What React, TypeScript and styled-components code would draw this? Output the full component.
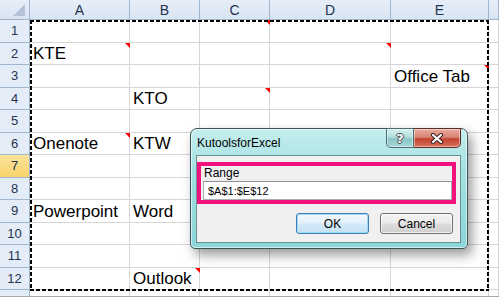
import { FC } from "react";
import styled, { createGlobalStyle } from "styled-components";

const GlobalStyle = createGlobalStyle`
  html, body {
    margin: 0;
    padding: 0;
    background: #fff;
  }
  body {
    width: 499px;
    height: 300px;
    overflow: hidden;
  }
`;

const Screen = styled.div`
  position: relative;
  width: 499px;
  height: 300px;
  overflow: hidden;
  background: #fff;
`;

const Sheet = styled.div`
  display: grid;
  grid-template-columns: 30px 100px 70px 70px 121px 98px 1fr;
  grid-template-rows: 20px repeat(13, 22.5px);
  height: 297px;
  overflow: hidden;
  border-bottom: 1px solid #a6a6a6;
  box-sizing: border-box;
`;

const Corner = styled.div`
  position: relative;
  background: linear-gradient(180deg, #e7eef8 0%, #d9e4f2 100%);
  border-right: 1px solid #9eb6ce;
  border-bottom: 1px solid #9eb6ce;

  &::after {
    content: "";
    position: absolute;
    right: 4px;
    bottom: 3px;
    border-left: 12px solid transparent;
    border-bottom: 12px solid #b4c4d8;
  }
`;

const ColHeader = styled.div`
  display: flex;
  align-items: center;
  justify-content: center;
  background: linear-gradient(180deg, #e7eef8 0%, #d9e4f2 100%);
  border-right: 1px solid #9eb6ce;
  border-bottom: 1px solid #9eb6ce;
  font-family: "Liberation Sans", Arial, sans-serif;
  font-size: 14px;
  color: #1e3350;
`;

const RowHeader = styled.div<{ $active?: boolean }>`
  display: flex;
  align-items: center;
  justify-content: center;
  background: ${(p) =>
    p.$active
      ? "linear-gradient(180deg, #fbe39b 0%, #f8d36a 100%)"
      : "#e4ecf7"};
  border-right: 1px solid #9eb6ce;
  border-bottom: 1px solid #9eb6ce;
  font-family: "Liberation Sans", Arial, sans-serif;
  font-size: 13px;
  color: #1e3350;
  box-sizing: border-box;
`;

const Cell = styled.div<{ $comment?: boolean }>`
  position: relative;
  display: flex;
  align-items: center;
  padding-left: 3px;
  padding-top: 2px;
  border-right: 1px solid #d6d6d6;
  border-bottom: 1px solid #d6d6d6;
  font-family: "Liberation Sans", Arial, sans-serif;
  font-size: 17px;
  color: #000;
  white-space: nowrap;
  box-sizing: border-box;

  &::after {
    content: "";
    display: ${(p) => (p.$comment ? "block" : "none")};
    position: absolute;
    top: 0;
    right: -1px;
    border-top: 5px solid #ff0000;
    border-left: 5px solid transparent;
  }
`;

const SheetWrap = styled.div`
  position: relative;
`;

const Marquee = styled.div`
  position: absolute;
  left: 30px;
  top: 20px;
  width: 459px;
  height: 271px;
  pointer-events: none;
  background:
    repeating-linear-gradient(90deg, #000 0 4px, transparent 4px 6px) top left / 100% 2px no-repeat,
    repeating-linear-gradient(90deg, #000 0 4px, transparent 4px 6px) bottom left / 100% 2px no-repeat,
    repeating-linear-gradient(180deg, #000 0 4px, transparent 4px 6px) top left / 2px 100% no-repeat,
    repeating-linear-gradient(180deg, #000 0 4px, transparent 4px 6px) top right / 2px 100% no-repeat;
`;

const Dialog = styled.div`
  position: absolute;
  left: 190px;
  top: 128px;
  width: 278px;
  height: 121px;
  box-sizing: border-box;
  display: flex;
  flex-direction: column;
  padding: 0 6px 5px 5px;
  border: 1px solid #3b5557;
  border-radius: 7px 7px 5px 5px;
  background: linear-gradient(180deg, #c6eeee 0%, #a3e1e2 35%, #8bd5d7 100%);
  box-shadow: inset 0 0 0 1px rgba(255, 255, 255, 0.6),
    4px 6px 12px rgba(0, 0, 0, 0.4);
  font-family: "Liberation Sans", Arial, sans-serif;
`;

const TitleBar = styled.div`
  height: 26px;
  display: flex;
  align-items: center;
  padding-left: 1px;
  padding-top: 2px;
  box-sizing: border-box;
  font-size: 12px;
  color: #000;
`;

const CaptionButtons = styled.div`
  position: absolute;
  top: -1px;
  right: 6px;
  display: flex;
`;

const CaptionButton = styled.div<{ $close?: boolean }>`
  width: ${(p) => (p.$close ? "47px" : "28px")};
  height: 20px;
  box-sizing: border-box;
  display: flex;
  align-items: center;
  justify-content: center;
  border: 1px solid ${(p) => (p.$close ? "#5e2a24" : "#4c6d70")};
  border-left-width: ${(p) => (p.$close ? "0" : "1px")};
  border-radius: ${(p) => (p.$close ? "0 0 5px 0" : "0 0 0 5px")};
  background: ${(p) =>
    p.$close
      ? "linear-gradient(180deg, #e9aa9e 0%, #d98573 45%, #c4412f 55%, #d4735d 100%)"
      : "linear-gradient(180deg, #d6f0f0 0%, #b3dcdc 45%, #8cc4c6 55%, #a7d8d8 100%)"};
  box-shadow: inset 0 0 0 1px rgba(255, 255, 255, 0.45);
`;

const HelpGlyph = styled.span`
  font-family: "DejaVu Sans", sans-serif;
  font-weight: bold;
  font-size: 13px;
  line-height: 1;
  color: #fff;
  text-shadow: 1px 0 0 #3d4b4c, -1px 0 0 #3d4b4c, 0 1px 0 #3d4b4c, 0 -1px 0 #3d4b4c;
`;

const Content = styled.div`
  flex: 1;
  display: flex;
  flex-direction: column;
  padding: 6px 4px 0 0;
  background: #f0f0f0;
  border: 1px solid #6e9094;
  box-sizing: border-box;
`;

const RangeGroup = styled.div`
  height: 42px;
  box-sizing: border-box;
  display: flex;
  flex-direction: column;
  padding: 0 0 0 2px;
  border: 4px solid #f0127f;
`;

const Label = styled.div`
  font-size: 12px;
  color: #000;
  height: 14px;
  line-height: 14px;
  padding-left: 1px;
`;

const RangeInput = styled.div`
  margin-top: 1px;
  height: 20px;
  box-sizing: border-box;
  display: flex;
  align-items: center;
  padding-left: 4px;
  background: #fff;
  border: 1px solid #abadb3;
  border-top-color: #8e9096;
  font-size: 11px;
  color: #000;
`;

const ButtonRow = styled.div`
  display: flex;
  justify-content: flex-end;
  gap: 11px;
  margin-top: 9px;
  padding-right: 3px;
`;

const Button = styled.div<{ $default?: boolean }>`
  width: 73px;
  height: 21px;
  box-sizing: border-box;
  display: flex;
  align-items: center;
  justify-content: center;
  border: 1px solid ${(p) => (p.$default ? "#3c7fb1" : "#707070")};
  border-radius: 3px;
  background: ${(p) =>
    p.$default
      ? "linear-gradient(180deg, #f2f8fc 0%, #e4f1fa 48%, #d3e9f7 52%, #c6e2f5 100%)"
      : "linear-gradient(180deg, #f2f2f2 0%, #ebebeb 48%, #dddddd 52%, #cfcfcf 100%)"};
  box-shadow: inset 0 0 0 1px ${(p) => (p.$default ? "#9fdaf6" : "rgba(255,255,255,0.7)")};
  font-size: 12px;
  color: #000;
`;

type CellData = { text?: string; comment?: boolean };

const columns = ["A", "B", "C", "D", "E", ""];

const data: Record<number, Record<string, CellData>> = {
  1: { C: { comment: true } },
  2: { A: { text: "KTE", comment: true }, D: { comment: true } },
  3: { E: { text: "Office Tab", comment: true } },
  4: { B: { text: "KTO" }, C: { comment: true } },
  6: { A: { text: "Onenote", comment: true }, B: { text: "KTW" } },
  9: { A: { text: "Powerpoint" }, B: { text: "Word" } },
  12: { B: { text: "Outlook", comment: true } },
};

const rows = Array.from({ length: 13 }, (_, i) => i + 1);

const CloseIcon: FC = () => (
  <svg width="14" height="11" viewBox="0 0 14 11">
    <path d="M3 2 L11 9 M11 2 L3 9" stroke="#3d2320" strokeWidth="4.2" strokeLinecap="round" />
    <path d="M3 2 L11 9 M11 2 L3 9" stroke="#fff" strokeWidth="2.2" strokeLinecap="round" />
  </svg>
);

const App: FC = () => {
  return (
    <Screen>
      <GlobalStyle />
      <SheetWrap>
        <Sheet>
          <Corner />
          {columns.map((c, i) => (
            <ColHeader key={"h" + i}>{c}</ColHeader>
          ))}
          {rows.map((r) => [
            <RowHeader key={"r" + r} $active={r === 7}>
              {r}
            </RowHeader>,
            ...columns.map((c, i) => {
              const cell = data[r]?.[c];
              return (
                <Cell key={r + "-" + i} $comment={cell?.comment}>
                  {cell?.text}
                </Cell>
              );
            }),
          ])}
        </Sheet>
        <Marquee />
      </SheetWrap>

      <Dialog>
        <TitleBar>KutoolsforExcel</TitleBar>
        <CaptionButtons>
          <CaptionButton>
            <HelpGlyph>?</HelpGlyph>
          </CaptionButton>
          <CaptionButton $close>
            <CloseIcon />
          </CaptionButton>
        </CaptionButtons>
        <Content>
          <RangeGroup>
            <Label>Range</Label>
            <RangeInput>$A$1:$E$12</RangeInput>
          </RangeGroup>
          <ButtonRow>
            <Button $default>OK</Button>
            <Button>Cancel</Button>
          </ButtonRow>
        </Content>
      </Dialog>
    </Screen>
  );
};

export default App;
